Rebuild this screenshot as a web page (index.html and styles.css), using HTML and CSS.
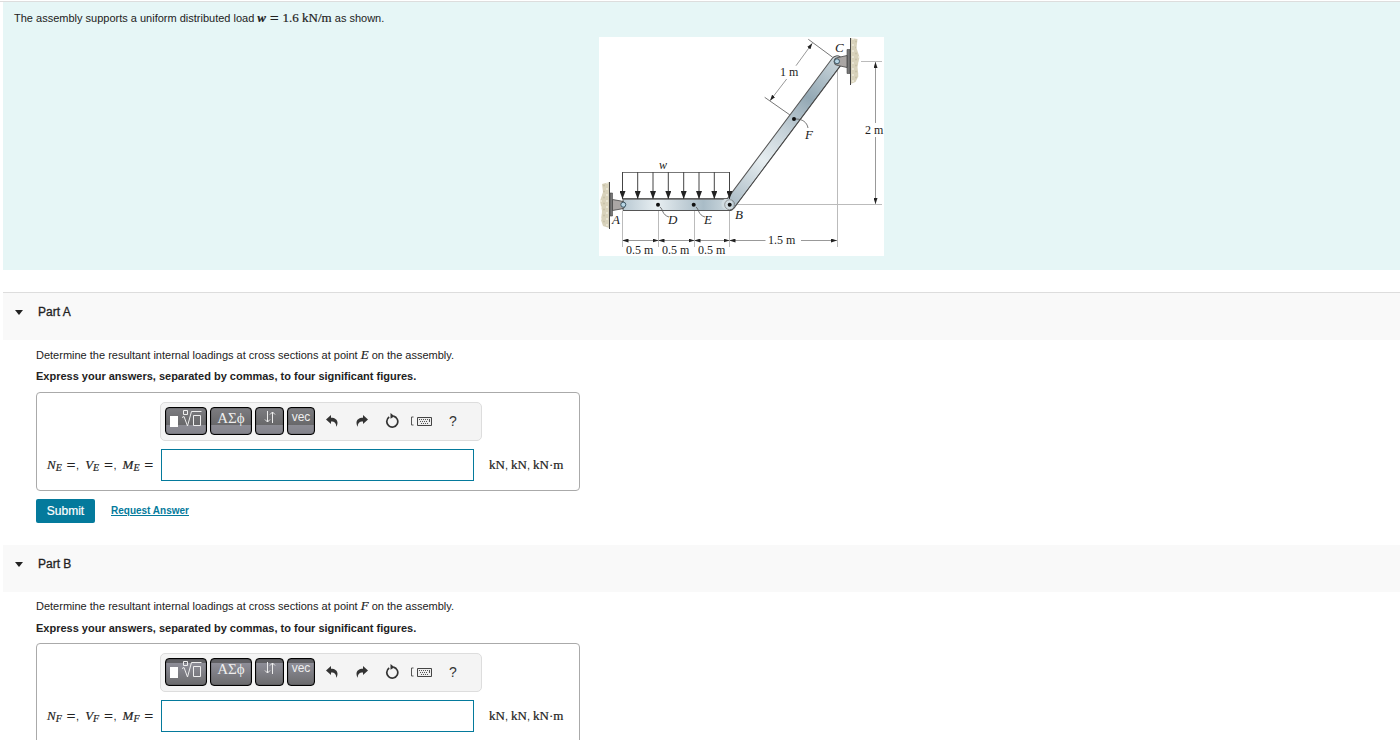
FILE: index.html
```html
<!DOCTYPE html>
<html lang="en">
<head>
<meta charset="utf-8">
<title>Internal loadings</title>
<link rel="stylesheet" href="styles.css">
</head>
<body>
<svg class="defs" aria-hidden="true">
  <symbol id="i-root" viewBox="0 0 34 20"><path d="M1 7h8v11H1z" fill="#fff"/><path d="M14.500 1.500h4v4h-4zM24.500 6.500h7v10h-7zM13 8.500l2-1 3.500 9.500 4-14.500h10" fill="none" stroke="#eee"/></symbol>
  <symbol id="i-arrows" viewBox="0 0 12 12"><path d="M3.500 0v11M1 8.500l2.500 2.500 2.500-2.500M8.500 12V1M6 3.500L8.500 1l2.500 2.500" fill="none" stroke="#eee"/></symbol>
  <symbol id="i-undo" viewBox="0 0 12 12"><path d="M0 4.500L5 0v2.700c4 0 6.500 2 6.500 5 0 1.500-.5 3-1.300 4C10.300 8.500 9 6.500 5 6.500V9z" fill="#333"/></symbol>
  <symbol id="i-reset" viewBox="0 0 14 16"><path d="M8.500 3.200A5.500 5.500 0 1 1 4.200 4" fill="none" stroke="#333" stroke-width="1.700"/><path d="M5.500 0v5.800l4-2.600z" fill="#333"/></symbol>
  <symbol id="i-keys" viewBox="0 0 21 12"><path d="M2.500 2H.5v8h2" fill="none" stroke="#555"/><path d="M6.500 2.500h14v8h-14z" fill="#eee" stroke="#444"/><path d="M8 4.500h9M9 6.500h8M10 8.500h7" stroke="#555" stroke-dasharray="1 1"/><path d="M18.500 4v3" stroke="#555"/></symbol>
</svg>
<main class="page">
  <section class="intro">
    <p class="text">The assembly supports a uniform distributed load <span class="math"><i class="bold">w</i> <span class="eq">=</span> 1.6 kN/m</span> as shown.</p>
    <div class="figure-row">
    <svg class="figure" viewBox="0 0 285 219" role="img" aria-label="Beam assembly with supports A and C">
      <defs>
        <linearGradient id="steel-h"><stop offset="0" stop-color="#b9c9d3"/><stop offset=".3" stop-color="#e8eff2"/><stop offset=".5" stop-color="#c9d5dc"/><stop offset=".72" stop-color="#a9bcc7"/><stop offset="1" stop-color="#d4dee3"/></linearGradient>
        <linearGradient id="steel-d"><stop offset="0" stop-color="#a9bac4"/><stop offset=".3" stop-color="#e6edf0"/><stop offset=".5" stop-color="#c5d1d8"/><stop offset=".72" stop-color="#93a8b4"/><stop offset="1" stop-color="#ced9de"/></linearGradient>
        <pattern id="stone" width="6" height="6" patternUnits="userSpaceOnUse"><rect width="6" height="6" fill="#d8d2bb"/><circle cx="2" cy="2" r="1" fill="#eeebdc"/><circle cx="5" cy="4.500" r="1" fill="#c8c1a8"/></pattern>
        <marker id="tip" viewBox="0 0 6 4" markerWidth="6" markerHeight="4" refX="6" refY="2" orient="auto-start-reverse" markerUnits="userSpaceOnUse"><path d="M0 0l6 2-6 2z" fill="#222"/></marker>
        <marker id="load" viewBox="0 0 8 6" markerWidth="8" markerHeight="6" refX="8" refY="3" orient="auto" markerUnits="userSpaceOnUse"><path d="M0 0l8 3-8 3z" fill="#222"/></marker>
      </defs>
      <path d="M10.300 145L3 147l1 8-3 9 2 10-1 9 2 6 6.300 2z" fill="url(#stone)"/>
      <path d="M251.500 1l7 1-1 9 3 9-2 10 1 9-3 6-5 2z" fill="url(#stone)"/>
      <path d="M10.500 145v47M251.500 1v47" stroke="#444"/>
      <path d="M11 156h2.500v23H11zM248 12.500h3v24h-3z" fill="#777" stroke="#444" stroke-width=".6"/>
      <g fill="none" stroke="#bbb">
        <path d="M23.500 174v36M59.500 174v36M95.500 174v36M130.500 174v36M137 167.500h146M238.500 31v179M262 24.500h21"/>
      </g>
      <path d="M24 161.500H131a6.200 6.200 0 0 1 0 12H24z" fill="url(#steel-h)" stroke="#555"/>
      <path d="M24 162h106" stroke="#666" stroke-width="1.500"/>
      <g transform="translate(130.700 167.700) rotate(-53.200)"><path d="M0-5.500H179a5.500 5.500 0 0 1 0 11H0" fill="url(#steel-d)" stroke="#555"/><path d="M2 5.300h176" stroke="#444" stroke-width=".7"/></g>
      <path d="M125.500 162h5.200a5.700 5.700 0 1 1-5.200 0z" fill="#d1dce1"/>
      <circle cx="130.700" cy="167.700" r="5" fill="none" stroke="#777" stroke-width=".7"/>
      <path d="M130.700 173.500a5.800 5.800 0 0 0 5-3" fill="none" stroke="#444"/>
      <path d="M13.500 162.500l8.500 1.500a4 4 0 0 1 0 8l-8.500 1.500z" fill="#aaa6a4" stroke="#444" stroke-width=".8"/>
      <path d="M248 18.500l-9 2a4 4 0 0 0 0 8l9 2z" fill="#aaa6a4" stroke="#444" stroke-width=".8"/>
      <g fill="#b7d5e5" stroke="#334e5c" stroke-width=".9"><circle cx="24.300" cy="167.700" r="2.500"/><circle cx="238" cy="24.300" r="2.500"/></g>
      <g fill="#111"><circle cx="59" cy="167.700" r="2"/><circle cx="94.700" cy="167.700" r="2"/><circle cx="130.700" cy="167.700" r="2"/><circle cx="195" cy="82" r="2"/></g>
      <path d="M23 135.500h108" stroke="#777"/>
      <g stroke="#444">
        <path d="M23.500 135v27" marker-end="url(#load)"/><path d="M38.700 135v27" marker-end="url(#load)"/><path d="M54 135v27" marker-end="url(#load)"/><path d="M69.300 135v27" marker-end="url(#load)"/><path d="M84.700 135v27" marker-end="url(#load)"/><path d="M100 135v27" marker-end="url(#load)"/><path d="M115.300 135v27" marker-end="url(#load)"/><path d="M130.500 135v27" marker-end="url(#load)"/>
      </g>
      <g fill="none" stroke="#999">
        <path d="M23.500 203.500h36" marker-start="url(#tip)" marker-end="url(#tip)"/><path d="M59.500 203.500h36" marker-start="url(#tip)" marker-end="url(#tip)"/><path d="M95.500 203.500h35" marker-start="url(#tip)" marker-end="url(#tip)"/>
        <path d="M130.500 203.500h36" marker-start="url(#tip)"/><path d="M202 203.500h36" marker-end="url(#tip)"/>
        <path d="M276.500 86V25" marker-end="url(#tip)"/><path d="M276.500 100v67" marker-end="url(#tip)"/>
        <path d="M197 28.700l16.300-22.400" marker-end="url(#tip)"/><path d="M187.700 42L171 63.700" marker-end="url(#tip)"/>
        <path d="M209.300 2.300l24.400 18M165.700 60.300L191 78" stroke="#777"/>
        <path d="M61 170c3 2 2 8 9 10M97 170c3 2 2 8 9 10M197 82c6 0 11 3 12 9" stroke="#555" stroke-width=".8"/>
      </g>
      <g class="labels">
        <text x="27" y="217">0.5 m</text><text x="63" y="217">0.5 m</text><text x="99" y="217">0.5 m</text><text x="169" y="207">1.5 m</text><text x="181" y="39">1 m</text><text x="266" y="97">2 m</text>
        <g class="points"><text x="13" y="187">A</text><text x="69" y="187">D</text><text x="105" y="187">E</text><text x="136" y="182">B</text><text x="236" y="15">C</text><text x="206" y="102">F</text></g>
        <text class="load-name" x="60" y="132">w</text>
      </g>
    </svg>
    </div>
  </section>

  <section class="part part-a">
    <header class="part-head"><span class="caret"></span><h2>Part A</h2></header>
    <div class="part-body">
      <p class="text">Determine the resultant internal loadings at cross sections at point <i class="math">E</i> on the assembly.</p>
      <p class="text strong">Express your answers, separated by commas, to four significant figures.</p>
      <div class="answer">
        <div class="toolbar">
          <button class="key wide" aria-label="Templates"><svg width="34" height="20"><use href="#i-root"/></svg></button>
          <button class="key wide greek">ΑΣϕ</button>
          <button class="key" aria-label="Subscripts"><svg width="12" height="12"><use href="#i-arrows"/></svg></button>
          <button class="key vec">vec</button>
          <span class="tools">
            <button class="tool" aria-label="Undo"><svg width="12" height="12"><use href="#i-undo"/></svg></button>
            <button class="tool" aria-label="Redo"><svg class="flip" width="12" height="12"><use href="#i-undo"/></svg></button>
            <button class="tool" aria-label="Reset"><svg width="14" height="16"><use href="#i-reset"/></svg></button>
            <button class="tool" aria-label="Keyboard shortcuts"><svg width="21" height="12"><use href="#i-keys"/></svg></button>
            <button class="tool help" aria-label="Help">?</button>
          </span>
        </div>
        <label class="symbols math" for="ans-a"><span><i>N<sub>E</sub></i> <span class="eq">=</span><small>,</small></span><span><i>V<sub>E</sub></i> <span class="eq">=</span><small>,</small></span><span><i>M<sub>E</sub></i> <span class="eq">=</span></span></label>
        <input class="entry" id="ans-a" type="text">
        <span class="units math">kN<small>, </small>kN<small>, </small>kN·m</span>
      </div>
      <div class="actions"><button class="submit">Submit</button><a class="request" href="#">Request Answer</a></div>
    </div>
  </section>

  <section class="part part-b">
    <header class="part-head"><span class="caret"></span><h2>Part B</h2></header>
    <div class="part-body">
      <p class="text">Determine the resultant internal loadings at cross sections at point <i class="math">F</i> on the assembly.</p>
      <p class="text strong">Express your answers, separated by commas, to four significant figures.</p>
      <div class="answer">
        <div class="toolbar">
          <button class="key wide" aria-label="Templates"><svg width="34" height="20"><use href="#i-root"/></svg></button>
          <button class="key wide greek">ΑΣϕ</button>
          <button class="key" aria-label="Subscripts"><svg width="12" height="12"><use href="#i-arrows"/></svg></button>
          <button class="key vec">vec</button>
          <span class="tools">
            <button class="tool" aria-label="Undo"><svg width="12" height="12"><use href="#i-undo"/></svg></button>
            <button class="tool" aria-label="Redo"><svg class="flip" width="12" height="12"><use href="#i-undo"/></svg></button>
            <button class="tool" aria-label="Reset"><svg width="14" height="16"><use href="#i-reset"/></svg></button>
            <button class="tool" aria-label="Keyboard shortcuts"><svg width="21" height="12"><use href="#i-keys"/></svg></button>
            <button class="tool help" aria-label="Help">?</button>
          </span>
        </div>
        <label class="symbols math" for="ans-b"><span><i>N<sub>F</sub></i> <span class="eq">=</span><small>,</small></span><span><i>V<sub>F</sub></i> <span class="eq">=</span><small>,</small></span><span><i>M<sub>F</sub></i> <span class="eq">=</span></span></label>
        <input class="entry" id="ans-b" type="text">
        <span class="units math">kN<small>, </small>kN<small>, </small>kN·m</span>
      </div>
    </div>
  </section>
</main>
</body>
</html>
```
FILE: styles.css
```css
* { box-sizing: border-box; }
html { overflow: hidden; }
body { margin: 0; background: #fff; color: #222; font: 11px/16px "Liberation Sans", Arial, sans-serif; }
button { font-family: inherit; padding: 0; cursor: pointer; }
.defs { display: none; }
.page { margin-top: 1px; border-top: 1px solid #ddd; padding-left: 3px; }
.text { margin: 0; height: 16px; white-space: nowrap; }
.strong { font-weight: bold; }
.math { font-family: "Liberation Serif", "Times New Roman", serif; font-size: 13px; line-height: 16px; -webkit-text-stroke: 0.2px; }
.math small { font: 11px "Liberation Sans", Arial, sans-serif; -webkit-text-stroke: 0; }
.math sub { font-size: 10px; line-height: 1; vertical-align: -2px; }
.eq { font: 12px/16px "DejaVu Serif", serif; -webkit-text-stroke: 0; }
.bold { font-weight: bold; }

.intro { background: #e6f6f6; padding: 8px 11px 14px; margin-bottom: 22px; }
.figure-row { display: flex; justify-content: center; padding: 11px 0 0 80px; }
.figure { display: block; width: 285px; height: 219px; background: #fff; }
.labels { font: 12px "Liberation Serif", serif; fill: #222; }
.points { font-size: 13px; font-style: italic; }
.load-name { font-size: 12px; font-style: italic; }

.part-head { display: flex; align-items: flex-start; height: 47px; padding: 11px 12px; gap: 15px; background: #f9f9f9; }
.part-a .part-head { border-top: 1px solid #ddd; height: 48px; }
.part-head h2 { margin: 0; font-size: 12px; line-height: 16px; font-weight: normal; -webkit-text-stroke: 0.3px; }
.caret { margin-top: 6px; border: 4px solid transparent; border-top: 5px solid #222; border-bottom: 0; }
.part-body { padding: 7px 33px 0; }
.part-body .strong { margin: 5px 0 8px; }
.part-b { margin-top: 22px; }
.part-b .part-body { padding-top: 6px; }
.part-b .part-body .strong { margin: 6px 0 7px; }

.answer { display: grid; grid-template-columns: 114px 313px auto; width: 544px; padding: 9px 10px; border: 1px solid #aaa; border-radius: 4px; align-items: center; row-gap: 8px; }
.part-b .answer { padding-bottom: 12px; }
.toolbar { grid-column: 2 / 4; display: flex; align-items: center; gap: 3px; width: 322px; height: 39px; padding: 0 4px 2px; margin-left: -1px; background: #f4f4f4; border: 1px solid #ddd; border-radius: 5px; }
.key { display: flex; flex: none; justify-content: center; align-items: flex-start; width: 29px; height: 28px; padding-top: 3px; border: 1px solid #000; border-radius: 4px; color: #eee; background: linear-gradient(#7c7c80, #68686a 66%, #8b8b93 66%, #83838b); box-shadow: inset 0 0 1px #000; }
.part-b .key { background: linear-gradient(#606064 16%, #8e8e98 16%, #6b6b6d); }
.wide { width: 42px; }
.wide svg { margin-top: -2px; }
.greek { font: 15px/16px "Liberation Serif", serif; padding-top: 2px; }
.vec { width: 28px; font-size: 12px; line-height: 12px; }
.tools { display: flex; gap: 3px; }
.tool { display: flex; align-items: center; justify-content: center; width: 27px; height: 28px; border: 0; background: none; }
.help { width: 30px; font-size: 14px; color: #333; }
.flip { transform: scaleX(-1); }
.entry { width: 100%; height: 32px; padding: 0 6px; border: 1px solid #047a9c; background: #fff; border-radius: 0; }
.units { padding-left: 15px; white-space: nowrap; }
.symbols { display: flex; gap: 6px; white-space: nowrap; }
.symbols i { padding-right: 1px; }
.actions { display: flex; align-items: center; gap: 16px; margin-top: 8px; }
.submit { width: 59px; height: 24px; border: 0; border-radius: 2px; background: #047a9c; color: #fff; font-size: 12px; -webkit-text-stroke: 0.2px; }
.request { color: #047a9c; font-size: 10px; font-weight: bold; }
```
